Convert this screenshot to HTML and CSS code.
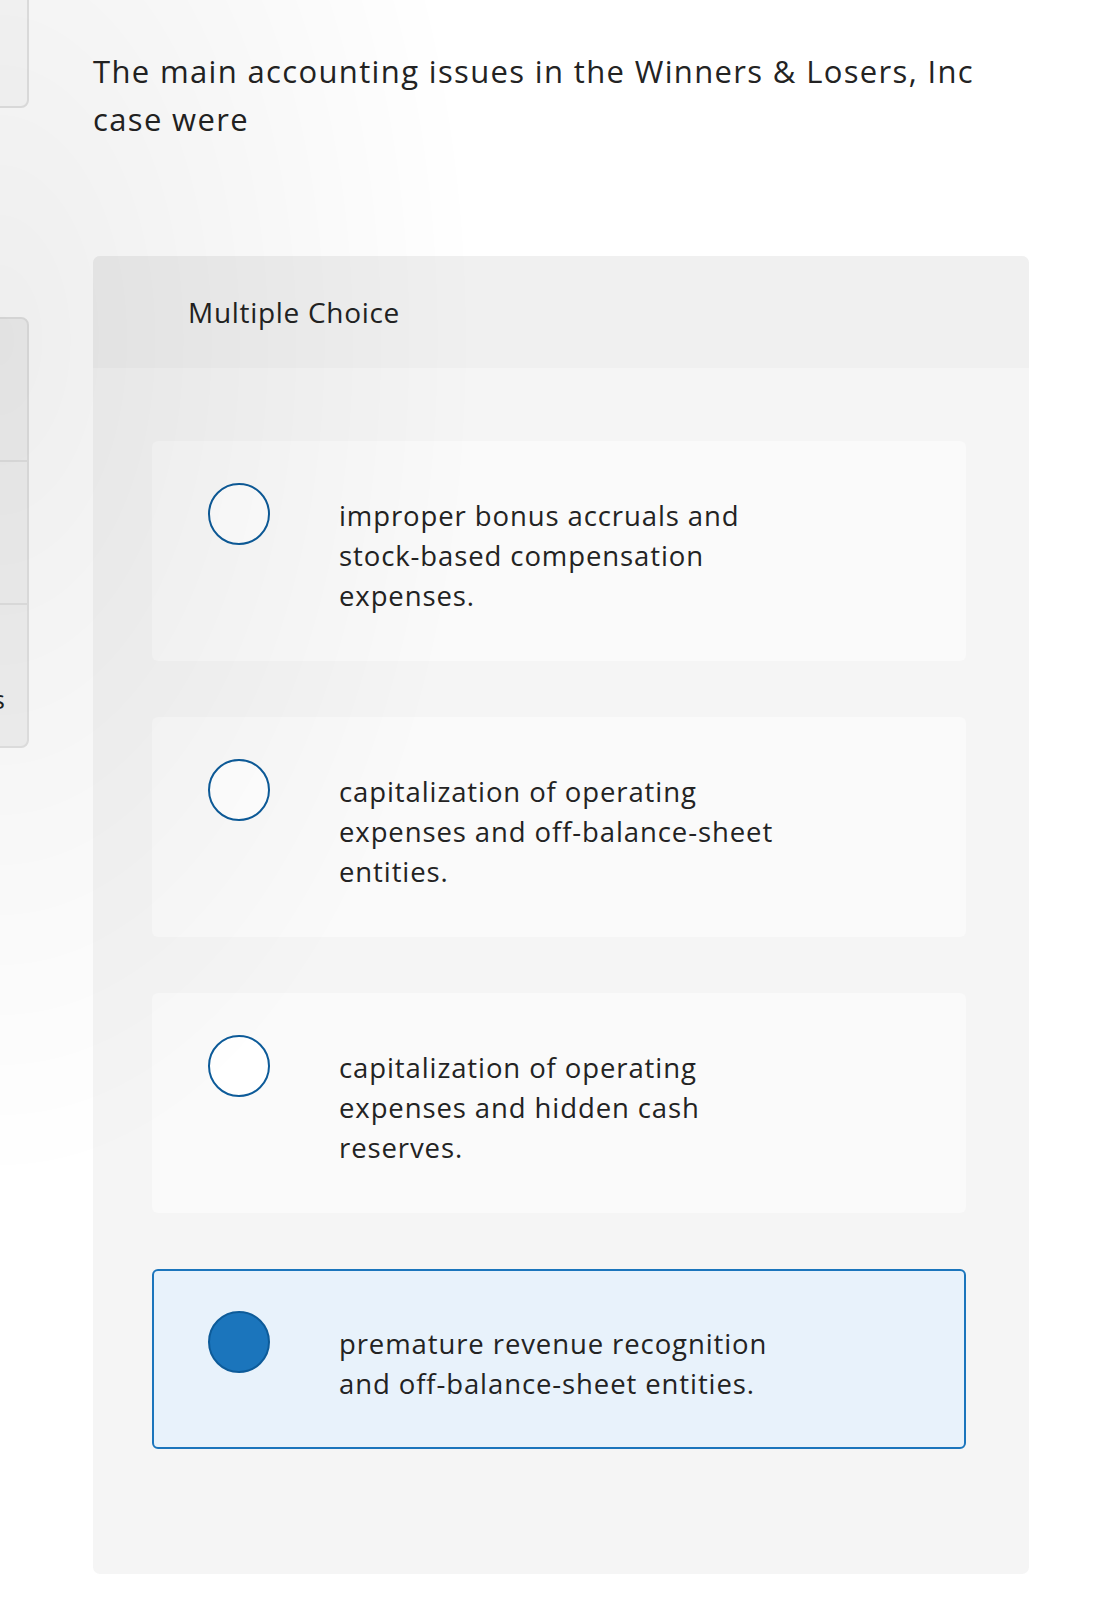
FILE: index.html
```html
<!DOCTYPE html>
<html lang="en">
<head>
    <meta charset="UTF-8">
    <meta name="viewport" content="width=device-width, initial-scale=1.0">
    <title>Multiple Choice</title>
    <link rel="stylesheet" href="styles.css">
</head>
<body>
    <div class="page">
        <!-- question list, cut off at the left edge -->
        <aside class="sidebar">
            <div class="side-box side-box-top"></div>
            <div class="side-box side-box-list">
                <div class="side-item"></div>
                <div class="side-item"></div>
                <div class="side-item side-item-label">Questions</div>
            </div>
        </aside>

        <main class="question">
            <p class="question-text">The main accounting issues in the Winners &amp; Losers, Inc case were</p>

            <div class="choice-panel">
                <div class="choice-header">Multiple Choice</div>

                <div class="choice-list">
                    <label class="choice">
                        <span class="radio"></span>
                        <span class="choice-text">improper bonus accruals and stock-based compensation expenses.</span>
                    </label>
                    <label class="choice">
                        <span class="radio"></span>
                        <span class="choice-text">capitalization of operating expenses and off-balance-sheet entities.</span>
                    </label>
                    <label class="choice">
                        <span class="radio"></span>
                        <span class="choice-text">capitalization of operating expenses and hidden cash reserves.</span>
                    </label>
                    <label class="choice selected">
                        <span class="radio"></span>
                        <span class="choice-text">premature revenue recognition and off-balance-sheet entities.</span>
                    </label>
                </div>
            </div>
        </main>
    </div>
</body>
</html>
```

FILE: styles.css
```css
:root {
    --text: #232323;
    --panel: #f5f5f5;
    --panel-head: #f0f0f0;
    --card: #fafafa;
    --radio: #0d5b99;
    --selected: #1b75bc;
    --selected-bg: #e8f2fb;
    --line: #e3e3e3;
}

body {
    margin: 0;
    background: #ffffff;
    font-family: 'Open Sans', 'Liberation Sans', sans-serif;
    color: var(--text);
}

/* soft shade falling over the left side of the page */
body::before {
    content: '';
    position: fixed;
    inset: 0;
    pointer-events: none;
    background: radial-gradient(ellipse 480px 850px at 0 340px, rgba(0, 0, 0, 0.065), rgba(0, 0, 0, 0) 100%);
    z-index: 5;
}

.page {
    display: flex;
    gap: 64px;
}

.sidebar {
    width: 29px;
    flex-shrink: 0;
    overflow: hidden;
}

.side-box {
    width: 220px;
    margin-left: -191px;
    border: 2px solid var(--line);
    border-radius: 8px;
    box-sizing: border-box;
    background: #fafafa;
}

.side-box-top {
    height: 116px;
    margin-top: -8px;
}

.side-box-list {
    margin-top: 209px;
    background: #f3f3f3;
}

.side-item {
    height: 141px;
    border-bottom: 2px solid var(--line);
}

.side-item-label {
    border-bottom: none;
    display: flex;
    align-items: flex-end;
    justify-content: flex-end;
    padding: 0 22px 34px 0;
    box-sizing: border-box;
    font-size: 26px;
    line-height: 1;
}

.question {
    width: 936px;
}

.question-text {
    margin: 47px 0 0;
    font-size: 31px;
    line-height: 48px;
    letter-spacing: 1.35px;
}

.choice-panel {
    margin-top: 113px;
    margin-bottom: 36px;
    background: var(--panel);
    border-radius: 7px;
    overflow: hidden;
}

.choice-header {
    height: 112px;
    display: flex;
    align-items: center;
    padding-left: 95px;
    background: var(--panel-head);
    font-size: 28px;
    letter-spacing: 0.7px;
}

.choice-list {
    display: flex;
    flex-direction: column;
    gap: 56px;
    padding: 73px 63px 125px 59px;
}

.choice {
    display: flex;
    align-items: flex-start;
    padding: 42px 20px 43px 56px;
    background: var(--card);
    border: 2px solid transparent;
    border-radius: 6px;
    cursor: pointer;
}

.radio {
    width: 62px;
    height: 62px;
    flex-shrink: 0;
    box-sizing: border-box;
    border: 2px solid var(--radio);
    border-radius: 50%;
    background: #ffffff;
    margin: -2px 0 0 -2px;
}

.choice-text {
    max-width: 462px;
    margin: 11px 0 0 69px;
    font-size: 27.5px;
    line-height: 40px;
    letter-spacing: 0.9px;
}

.choice.selected {
    background: var(--selected-bg);
    border-color: var(--selected);
}

.choice.selected .radio {
    background: var(--selected);
    border-color: var(--radio);
}
```
